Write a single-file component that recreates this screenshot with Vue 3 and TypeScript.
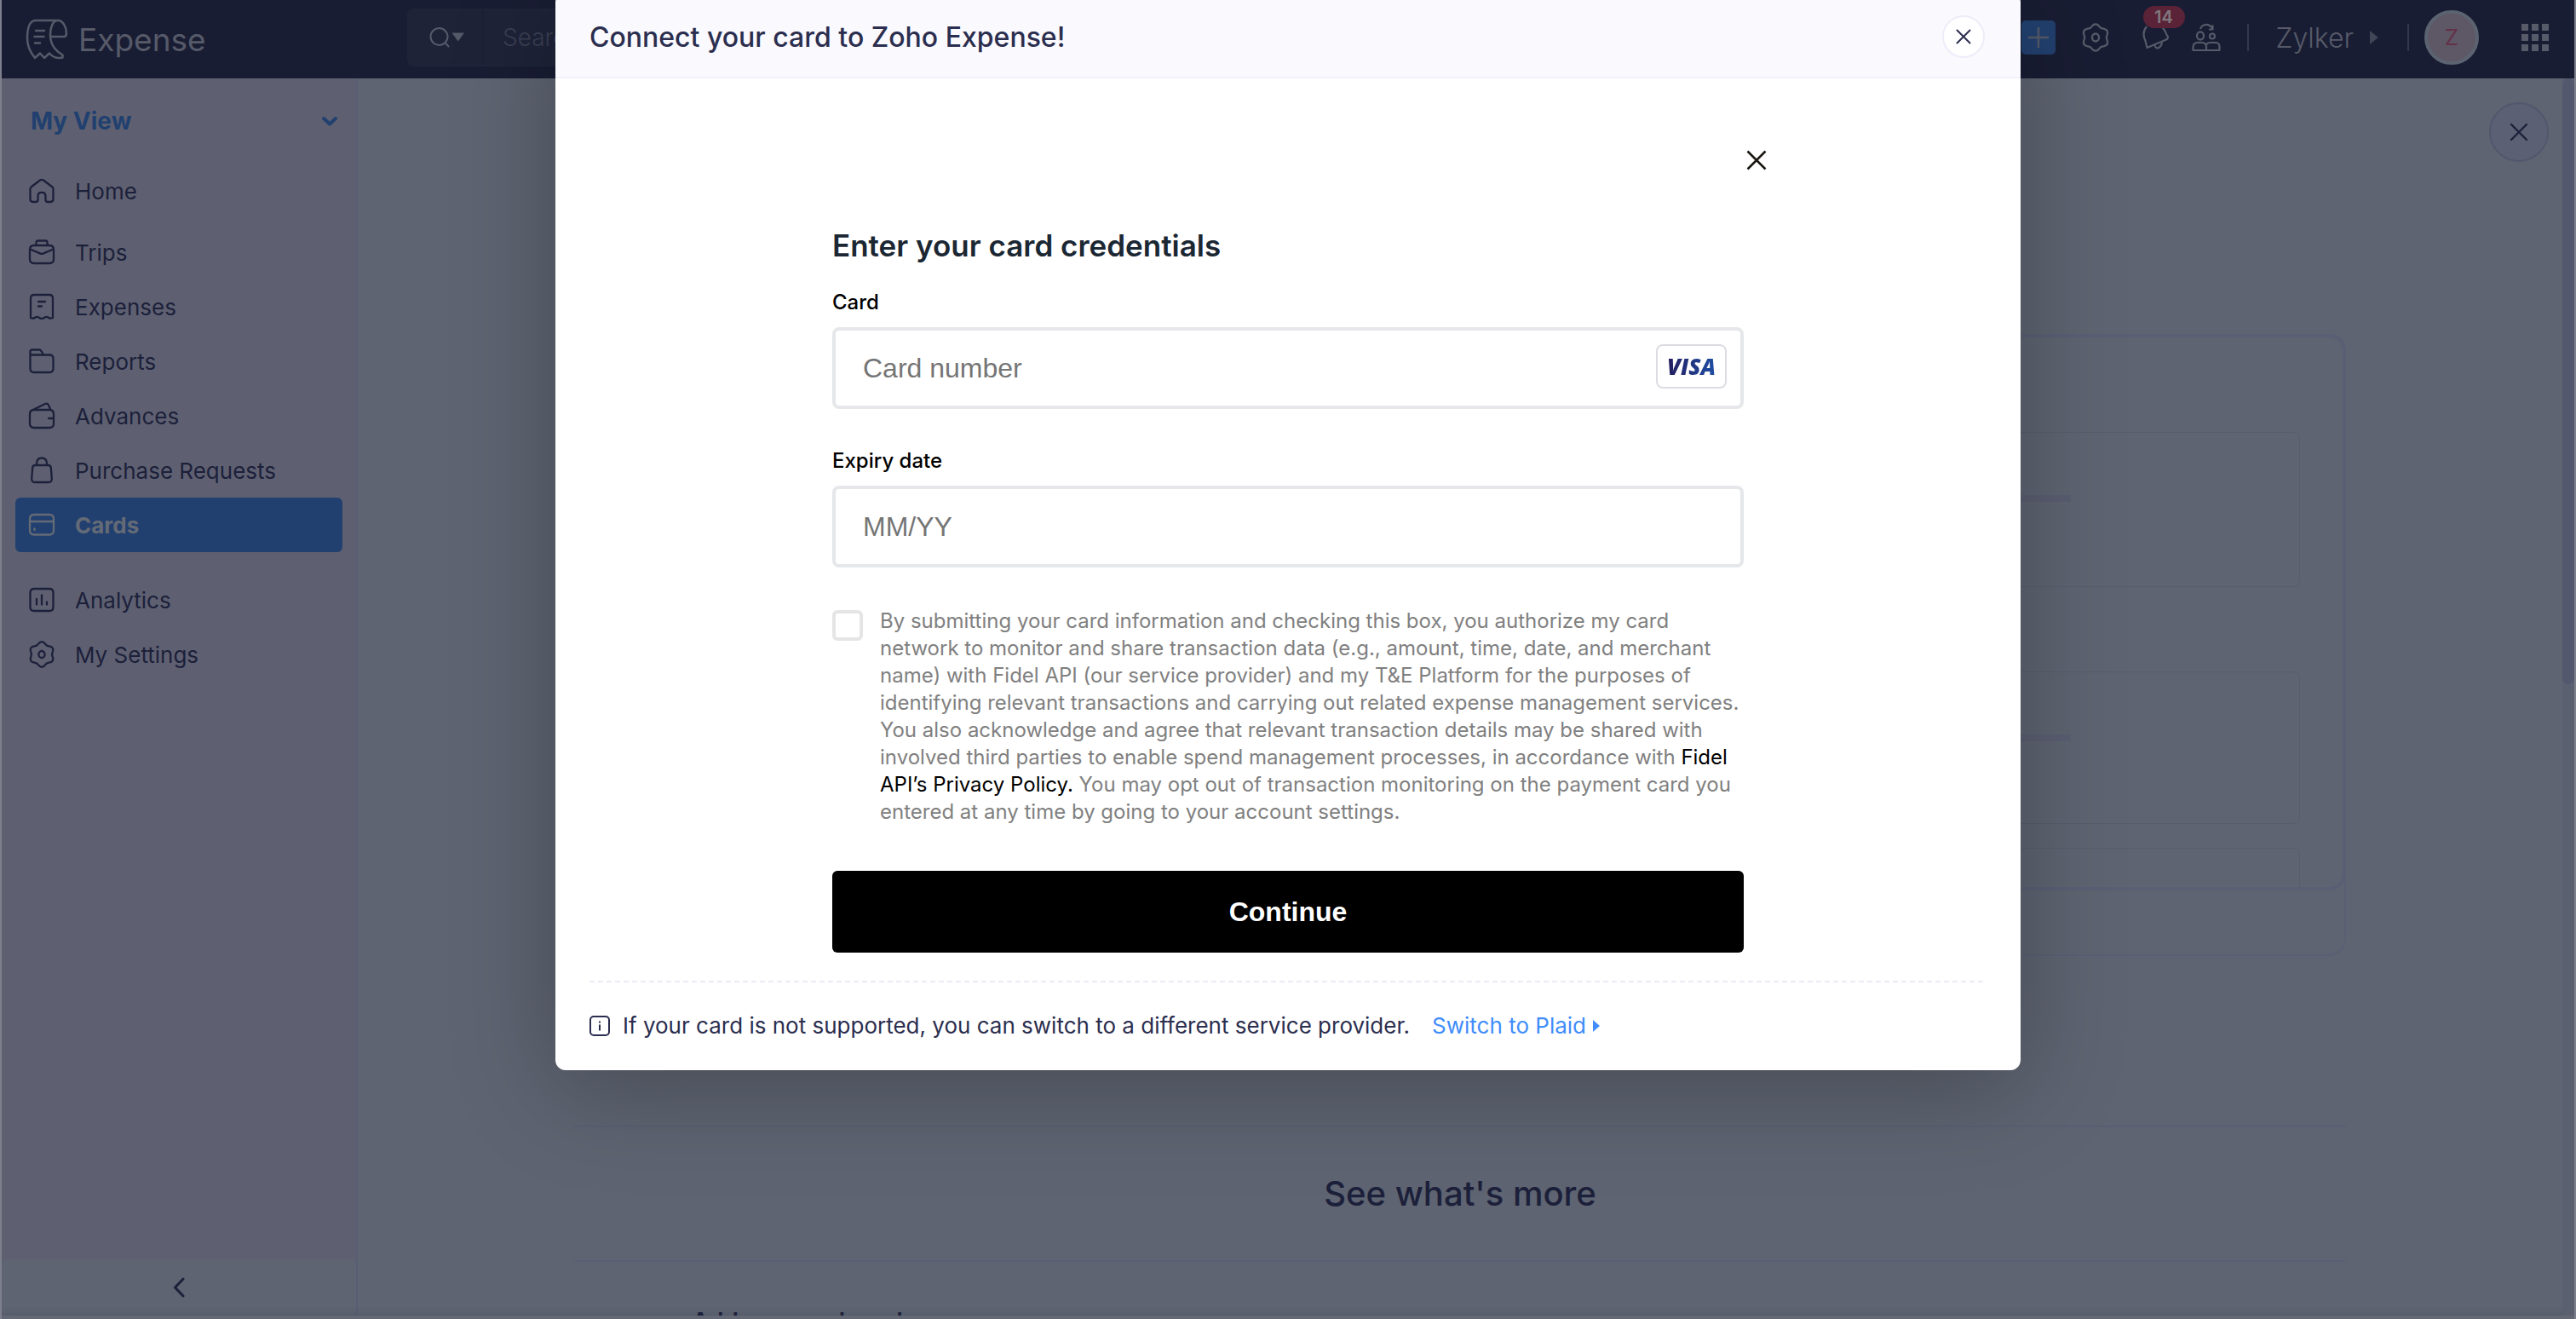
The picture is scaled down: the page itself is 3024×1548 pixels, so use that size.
<script setup lang="ts">
import { ref } from 'vue'

interface NavItem {
  label: string
  icon: string
  group: 'home' | 'main' | 'account'
}

const navItems: NavItem[] = [
  { label: 'Home', icon: 'home', group: 'home' },
  { label: 'Trips', icon: 'trips', group: 'main' },
  { label: 'Expenses', icon: 'expenses', group: 'main' },
  { label: 'Reports', icon: 'reports', group: 'main' },
  { label: 'Advances', icon: 'advances', group: 'main' },
  { label: 'Purchase Requests', icon: 'purchase', group: 'main' },
  { label: 'Cards', icon: 'cards', group: 'main' },
  { label: 'Analytics', icon: 'analytics', group: 'account' },
  { label: 'My Settings', icon: 'settings', group: 'account' },
]
const groups: NavItem['group'][] = ['home', 'main', 'account']
const active = ref('Cards')

const cardNumber = ref('')
const expiry = ref('')
const consent = ref(false)

const iconPaths: Record<string, string> = {
  home: 'M3.5 11.5 L14 3.5 Q16 2.2 18 3.5 L28.5 11.5 Q29.5 12.5 29.5 14 V25.5 Q29.5 29 26 29 H23 Q20.5 29 20.5 26.5 V22 Q20.5 17.8 16 17.8 Q11.5 17.8 11.5 22 V26.5 Q11.5 29 9 29 H6 Q2.5 29 2.5 25.5 V14 Q2.5 12.5 3.5 11.5 Z',
  trips: 'M7 8 H25 Q30 8 30 13 V24 Q30 29 25 29 H7 Q2 29 2 24 V13 Q2 8 7 8 Z M9.5 8 V4.5 Q9.5 2.5 11.5 2.5 H20.5 Q22.5 2.5 22.5 4.5 V8 M2.5 12.5 L14.5 17.6 Q16 18.2 17.5 17.6 L29.5 12.5',
  expenses: 'M3 29 V6 Q3 2 7 2 H25 Q29 2 29 6 V29 Q26 30.5 23 28.3 Q21 27.3 19.4 28.7 Q16 31 12.6 28.7 Q11 27.3 9 28.3 Q6 30.5 3 29 Z M12 10 H20 M12 15.5 H16',
  reports: 'M2.5 8.5 V4.5 Q2.5 2.5 4.5 2.5 H13 Q14.5 2.5 15.5 4 L18.2 8.5 M2.5 8.5 H25 Q29.5 8.5 29.5 13 V24.5 Q29.5 29 25 29 H7 Q2.5 29 2.5 24.5 Z',
  advances: 'M7 9 H25 Q30 9 30 14 V25 Q30 30 25 30 H7 Q2 30 2 25 V14 Q2 9 7 9 Z M3.5 10 L20.5 1.8 Q22.6 1 23.7 3 L26.5 9 M29 19 H24',
  purchase: 'M8.5 10 H23.5 Q26.5 10 26.8 13 L27.8 25.5 Q28 30 24 30 H8 Q4 30 4.2 25.5 L5.2 13 Q5.5 10 8.5 10 Z M10 10 V7.5 Q10.5 1.5 16 1.5 Q21.5 1.5 22 7.5 V10',
  cards: 'M7 4 H25 Q30 4 30 9 V22.5 Q30 27.5 25 27.5 H7 Q2 27.5 2 22.5 V9 Q2 4 7 4 Z M2 12 H30 M7.5 20.5 V22',
  analytics: 'M7 3 H25 Q29.5 3 29.5 7.5 V24.5 Q29.5 29 25 29 H7 Q2.5 29 2.5 24.5 V7.5 Q2.5 3 7 3 Z M10 15 V21.5 M16 10.5 V21.5 M22 18.5 V21.5',
}

/* Six-lobed cog outline, one lobe pointing up. */
function cogPath(): string {
  const points: string[] = []
  for (let i = 0; i < 96; i++) {
    const t = (i / 96) * Math.PI * 2
    const r = 13.4 + 1.3 * Math.cos(6 * t)
    points.push(`${(16 + r * Math.sin(t)).toFixed(2)} ${(16 - r * Math.cos(t)).toFixed(2)}`)
  }
  return `M${points.join(' L')} Z`
}
const cog = cogPath()
iconPaths.settings = `${cog} M19.6 16 A3.6 4 0 1 1 12.4 16 A3.6 4 0 1 1 19.6 16 Z`
</script>

<template>
  <div class="app">
    <header class="topbar">
      <a class="brand" href="#">
        <svg width="50" height="50" viewBox="0 0 50 50" fill="none" stroke="currentColor" stroke-width="2.5" stroke-linejoin="round" stroke-linecap="round">
          <path d="M38 3 H12 C5 3 2 12 2 24 C2 33 6 41 11 47 L17 41.5 L22 47 L28 41.5 C32 46 38 48 43.5 46.5 V43.5 C34 38 29 30 29 20 C29 11 32 3 38 3 C44 3 48 11 48 18 C48 21 47 22 45 22 H29" />
          <path d="M12 15 H22 M10.5 22 H21.5 M11 29.5 H17" />
        </svg>
        <span>Expense</span>
      </a>
      <div class="search">
        <button class="search-scope" type="button" aria-label="Search scope">
          <svg width="42" height="26" viewBox="0 0 42 26" fill="none" stroke="currentColor" stroke-width="2">
            <circle cx="11.5" cy="12" r="10" />
            <path d="M18.5 19 L23 24" />
            <path d="M26.5 7.5 H41 L33.7 17.5 Z" fill="currentColor" stroke="none" />
          </svg>
        </button>
        <input class="search-input" type="text" placeholder="Search in Cards" aria-label="Search" />
      </div>
      <div class="tools">
        <button class="add" type="button" aria-label="Add">
          <svg width="24" height="24" viewBox="0 0 24 24" stroke="currentColor" stroke-width="2.5"><path d="M12 0 V24 M0 12 H24" /></svg>
        </button>
        <button class="tool" type="button" aria-label="Settings">
          <svg width="34" height="34" viewBox="0 0 32 32" fill="none" stroke="currentColor" stroke-width="2.2">
            <path :d="cog" /><ellipse cx="16" cy="16" rx="3.8" ry="4.2" />
          </svg>
        </button>
        <button class="tool bell" type="button" aria-label="Notifications">
          <svg width="34" height="34" viewBox="0 0 34 34" fill="none" stroke="currentColor" stroke-width="2.2" stroke-linejoin="round">
            <path d="M6 4 C2 9 1.5 15 4.5 21 L6.5 29 L29 19.5 C31.5 18 31.5 16 29.5 14 C28 9 25 5 21 2" />
            <path d="M15.5 26 C16 31 22.5 31 24 22.5" />
          </svg>
          <span class="badge">14</span>
        </button>
        <button class="tool people" type="button" aria-label="Switch account">
          <svg width="34" height="34" viewBox="0 0 34 34" fill="none" stroke="currentColor" stroke-width="2.2" stroke-linejoin="round">
            <ellipse cx="10" cy="15" rx="4" ry="4.6" /><circle cx="24" cy="15.5" r="3" />
            <path d="M1.5 32 V28 Q2 23 7 23 H12 Q17 23 17 28 V32 Z M17 32 H32.5 V28 Q32.5 23 28 23 H21 Q18.5 23 17 25.5" />
            <path d="M10 7 C12 1 20 0 24 6 M24.5 2.5 V7.5 H20" />
          </svg>
        </button>
        <span class="rule"></span>
        <button class="org" type="button">
          <span>Zylker</span>
          <svg width="12" height="18" viewBox="0 0 12 18"><path d="M1 1 L11 9 L1 17 Z" fill="currentColor" /></svg>
        </button>
        <span class="rule"></span>
        <span class="avatar">Z</span>
        <button class="apps" type="button" aria-label="All apps">
          <svg width="32" height="32" viewBox="0 0 32 32" fill="currentColor">
            <path d="M0 0h8v8H0z M12 0h8v8h-8z M24 0h8v8h-8z M0 12h8v8H0z M12 12h8v8h-8z M24 12h8v8h-8z M0 24h8v8H0z M12 24h8v8h-8z M24 24h8v8h-8z" />
          </svg>
        </button>
      </div>
    </header>

    <div class="body">
      <aside class="sidebar">
        <button class="view" type="button">
          <span>My View</span>
          <svg width="20" height="12" viewBox="0 0 20 12" fill="none" stroke="currentColor" stroke-width="4" stroke-linecap="round" stroke-linejoin="round"><path d="M3 3 L10 9.5 L17 3" /></svg>
        </button>
        <nav class="nav">
          <ul v-for="g in groups" :key="g" :class="['group', g]">
            <li v-for="item in navItems.filter((n) => n.group === g)" :key="item.label">
              <a href="#" :class="['link', { active: active === item.label }]" @click.prevent="active = item.label">
                <svg width="32" height="32" viewBox="0 0 32 32" fill="none" stroke="currentColor" stroke-width="2.3" stroke-linejoin="round" stroke-linecap="round"><path :d="iconPaths[item.icon]" /></svg>
                <span>{{ item.label }}</span>
              </a>
            </li>
          </ul>
        </nav>
        <button class="collapse" type="button" aria-label="Collapse sidebar">
          <svg width="14" height="24" viewBox="0 0 14 24" fill="none" stroke="currentColor" stroke-width="3" stroke-linecap="round" stroke-linejoin="round"><path d="M12 2 L2.5 12 L12 22" /></svg>
        </button>
      </aside>

      <main class="page">
        <div class="content">
          <section class="promo">
            <div class="preview">
              <div class="tile"><i class="line"></i></div>
              <div class="tile later"><i class="line"></i></div>
              <div class="tile"></div>
            </div>
          </section>
          <h2 class="more">See what's more</h2>
          <h3 class="feature">Add personal card</h3>
        </div>
        <button class="page-close" type="button" aria-label="Close page">
          <svg width="22" height="22" viewBox="0 0 22 22" stroke="currentColor" stroke-width="2.4" stroke-linecap="round"><path d="M2 2 L20 20 M20 2 L2 20" /></svg>
        </button>
        <div class="scrollbar"><div class="thumb"></div></div>
      </main>
    </div>
    <div class="edge"></div>

    <div class="overlay">
      <section class="modal" role="dialog" aria-labelledby="dialog-title">
        <header class="modal-head">
          <h1 id="dialog-title">Connect your card to Zoho Expense!</h1>
          <button class="round-close" type="button" aria-label="Close">
            <svg width="18" height="18" viewBox="0 0 18 18" stroke="currentColor" stroke-width="2" stroke-linecap="round"><path d="M1.5 1.5 L16.5 16.5 M16.5 1.5 L1.5 16.5" /></svg>
          </button>
        </header>
        <div class="frame">
          <button class="frame-close" type="button" aria-label="Close form">
            <svg width="24" height="24" viewBox="0 0 24 24" stroke="currentColor" stroke-width="2.6"><path d="M1.5 1.5 L22.5 22.5 M22.5 1.5 L1.5 22.5" /></svg>
          </button>
          <form class="form" @submit.prevent>
            <h2>Enter your card credentials</h2>
            <div class="field">
              <label for="card-number">Card</label>
              <div class="control">
                <input id="card-number" v-model="cardNumber" type="text" inputmode="numeric" placeholder="Card number" />
                <span class="visa"><b>VISA</b></span>
              </div>
            </div>
            <div class="field">
              <label for="expiry">Expiry date</label>
              <div class="control">
                <input id="expiry" v-model="expiry" type="text" inputmode="numeric" placeholder="MM/YY" />
              </div>
            </div>
            <div class="consent">
              <input id="consent" v-model="consent" type="checkbox" />
              <label for="consent">By submitting your card information and checking this box, you authorize my card network to monitor and share transaction data (e.g., amount, time, date, and merchant name) with Fidel API (our service provider) and my T&amp;E Platform for the purposes of identifying relevant transactions and carrying out related expense management services. You also acknowledge and agree that relevant transaction details may be shared with involved third parties to enable spend management processes, in accordance with <a href="#">Fidel API’s Privacy Policy.</a> You may opt out of transaction monitoring on the payment card you entered at any time by going to your account settings.</label>
            </div>
            <button class="submit" type="submit">Continue</button>
          </form>
        </div>
        <footer class="modal-foot">
          <svg width="24" height="24" viewBox="0 0 24 24" fill="none" stroke="currentColor" stroke-width="2"><rect x="1" y="1" width="22" height="22" rx="4" /><path d="M12 10.5 V17.5 M12 6.5 V8.5" /></svg>
          <span>If your card is not supported, you can switch to a different service provider.</span>
          <a href="#">Switch to Plaid<svg width="8" height="14" viewBox="0 0 8 14"><path d="M0 0 L8 7 L0 14 Z" fill="currentColor" /></svg></a>
        </footer>
      </section>
    </div>
  </div>
</template>

<style>
body {
  background: #5e6471;
}
</style>

<style scoped>
* {
  box-sizing: border-box;
}

button {
  padding: 0;
  border: 0;
  background: none;
  color: inherit;
  font: inherit;
  cursor: pointer;
}

svg {
  display: block;
  flex: none;
}

h1,
h2,
h3,
ul {
  margin: 0;
  padding: 0;
}

a {
  color: inherit;
  text-decoration: none;
}

.app {
  position: relative;
  display: flex;
  flex-direction: column;
  height: 100vh;
  overflow: hidden;
  border-left: 2px solid #7d808c;
  border-right: 2px solid #7d808c;
  background: #5e6471;
  color: #1c203a;
  font-family: Inter, "Liberation Sans", sans-serif;
  font-size: 26px;
}

/* Top bar */
.topbar {
  display: flex;
  align-items: center;
  flex: none;
  height: 92px;
  padding: 0 30px 0 28px;
  background: #191d33;
  color: #565a69;
}

.brand {
  display: flex;
  align-items: center;
  gap: 12px;
  width: 448px;
  font-size: 37px;
  flex: none;
}

.search {
  display: flex;
  width: 900px;
  height: 68px;
  margin-bottom: 4px;
  border: 2px solid #1f2439;
  border-radius: 8px;
  background: #1e2338;
}

.search-scope {
  display: flex;
  align-items: center;
  justify-content: center;
  width: 88px;
  padding-left: 4px;
  border-right: 2px solid #1c2035;
}

.search-input {
  flex: 1;
  padding: 0 22px;
  border: 0;
  background: none;
  color: #3a3f52;
  font: 300 28px Inter, sans-serif;
}

.search-input::placeholder {
  color: #3a3f52;
  opacity: 1;
}

.tools {
  display: flex;
  align-items: center;
  margin-left: auto;
  margin-bottom: 4px;
}

.add {
  display: grid;
  place-items: center;
  width: 40px;
  height: 40px;
  margin-right: 30px;
  border-radius: 5px;
  background: #22406f;
}

.tool {
  position: relative;
  margin-right: 37px;
}

.people {
  margin: 0 31px 0 -12px;
}

.badge {
  position: absolute;
  left: 2px;
  top: -20px;
  width: 49px;
  height: 26px;
  border-radius: 13px;
  background: #5b2337;
  color: #80787f;
  font-size: 20px;
  font-weight: 600;
  line-height: 26px;
  text-align: center;
}

.rule {
  width: 2px;
  height: 32px;
  background: #333749;
}

.org {
  display: flex;
  align-items: center;
  gap: 18px;
  margin: 0 33px 0 32px;
  font-size: 32px;
  font-weight: 300;
}

.org svg {
  color: #414557;
}

.avatar {
  width: 64px;
  height: 64px;
  margin: 0 50px 0 18px;
  border: 4px solid #5b6370;
  border-radius: 50%;
  background: #5e5766;
  color: #633247;
  font-size: 26px;
  line-height: 56px;
  text-align: center;
}

/* Sidebar */
.body {
  display: flex;
  flex: 1;
  min-height: 0;
}

.sidebar {
  display: flex;
  flex-direction: column;
  flex: none;
  width: 418px;
  border-right: 2px solid #595e75;
  background: #5e6071;
}

.view {
  display: flex;
  align-items: center;
  justify-content: space-between;
  height: 44px;
  margin: 28px 21px 0 34px;
  color: #21406f;
  font-size: 28px;
  font-weight: 700;
}

.nav {
  flex: 1;
  padding-top: 28px;
}

.group {
  list-style: none;
}

.group.main {
  padding: 8px 0 24px;
}

.link {
  display: flex;
  align-items: center;
  gap: 23px;
  height: 64px;
  margin: 0 16px;
  padding-left: 15px;
  border-radius: 6px;
}

.link.active {
  background: #22406f;
  color: #646a76;
  font-weight: 700;
}

.collapse {
  display: grid;
  place-items: center;
  height: 66px;
  border-radius: 6px;
  background: #5e6471;
}

/* Page under the dialog */
.page {
  position: relative;
  flex: 1;
  min-width: 0;
  overflow: hidden;
}

.content {
  margin: 300px 268px 0 254px;
}

.promo {
  height: 730px;
  border: 2px solid #5a5f74;
  border-radius: 20px;
}

.preview {
  height: 653px;
  margin: -2px;
  padding: 111px 50px 0;
  overflow: hidden;
  border: 4px solid #5a5f74;
  border-radius: 20px;
}

.tile {
  height: 182px;
  padding: 73px 268px 0 800px;
  border: 1px solid #585d6c;
  border-radius: 8px;
}

.tile.later {
  height: 179px;
  margin: 99px 0 28px;
}

.line {
  display: block;
  height: 8px;
  background: #5a5e71;
}

.more {
  margin-top: 199px;
  border-top: 2px solid #5a5f74;
  border-bottom: 2px solid #5a5f74;
  font-size: 40px;
  font-weight: 500;
  line-height: 156px;
  text-align: center;
}

.feature {
  margin: 50px 0 0 138px;
  font-size: 28px;
  font-weight: 600;
  line-height: 40px;
}

.page-close {
  position: absolute;
  top: 28px;
  right: 30px;
  display: grid;
  place-items: center;
  width: 70px;
  height: 70px;
  border: 2px solid #53576d;
  border-radius: 50%;
  background: #5b6074;
}

.scrollbar {
  position: absolute;
  top: 0;
  right: 0;
  bottom: 0;
  width: 14px;
  background: #5b6071;
}

.thumb {
  height: 49%;
  border-radius: 7px;
  background: #54586e;
}

.edge {
  flex: none;
  height: 4px;
  background: #636874;
  box-shadow: 0 0 10px rgba(40, 44, 60, 0.4);
}

/* Dialog */
.overlay {
  position: absolute;
  inset: 0;
  display: flex;
  align-items: flex-start;
  justify-content: center;
}

.modal {
  width: 90%;
  max-width: 1720px;
  margin-top: -8px;
  border-radius: 12px;
  background: #fff;
  color: #2b2e4e;
  box-shadow: 0 20px 120px rgba(0, 0, 0, 0.26);
}

.modal-head {
  display: flex;
  align-items: center;
  justify-content: space-between;
  height: 100px;
  padding: 4px 42px 0 40px;
  border-bottom: 2px solid #f2f2fd;
  border-radius: 12px 12px 0 0;
  background: #f9f9fe;
}

.modal-head h1 {
  font-size: 32px;
  font-weight: 500;
}

.round-close {
  display: grid;
  place-items: center;
  width: 50px;
  height: 50px;
  border: 2px solid #ededf9;
  border-radius: 50%;
  background: #fff;
}

.frame {
  display: flex;
  flex-direction: column;
  max-width: 1124px;
  margin: 0 auto;
  padding-top: 84px;
}

.frame-close {
  align-self: flex-end;
  color: #1b1712;
}

.form {
  padding: 66px 27px 33px;
}

.form h2 {
  margin-bottom: 31px;
  color: #1b2733;
  font-size: 35px;
  font-weight: 600;
  line-height: 44px;
}

.field {
  margin-bottom: 47px;
  color: #000;
}

.field label {
  display: block;
  margin-bottom: 15px;
  font-size: 24px;
  font-weight: 500;
  line-height: 28px;
}

.control {
  display: flex;
  align-items: center;
  height: 96px;
  padding: 0 16px 0 32px;
  border: 4px solid #e6e7eb;
  border-radius: 8px;
}

.control input {
  flex: 1;
  min-width: 0;
  padding: 0;
  border: 0;
  outline: 0;
  color: #000;
  font: 32px "Liberation Sans", Arial, sans-serif;
}

.control input::placeholder {
  color: #757575;
}

.visa {
  display: grid;
  place-items: center;
  width: 83px;
  height: 52px;
  margin-bottom: 4px;
  border: 2px solid #dcdde2;
  border-radius: 8px;
}

.visa b {
  background: linear-gradient(90deg, #231d5f, #1f4ea3);
  background-clip: text;
  color: transparent;
  font: italic 800 26px/36px "Open Sans", sans-serif;
}

.consent {
  display: flex;
  align-items: flex-start;
  gap: 20px;
  margin-bottom: 53px;
}

.consent input {
  flex: none;
  width: 36px;
  height: 36px;
  margin: 3px 0 0;
  border: 4px solid #e5e5e5;
  border-radius: 6px;
  appearance: none;
  background: #fff;
}

.consent input:checked {
  background: #000;
}

.consent label {
  color: #808080;
  font-size: 24px;
  line-height: 32px;
}

.consent a {
  color: #000;
}

.submit {
  display: block;
  width: 100%;
  height: 96px;
  border-radius: 6px;
  background: #000;
  color: #fff;
  font: 700 32px "Liberation Sans", Arial, sans-serif;
}

.modal-foot {
  display: flex;
  align-items: center;
  height: 105px;
  margin: 0 40px;
  background: repeating-linear-gradient(90deg, #ebebf7 0 6px, transparent 6px 10px) top / 100% 2px no-repeat;
  font-size: 26px;
}

.modal-foot span {
  margin: 0 26px 0 15px;
}

.modal-foot a {
  display: flex;
  align-items: center;
  gap: 8px;
  color: #408dfb;
}
</style>
